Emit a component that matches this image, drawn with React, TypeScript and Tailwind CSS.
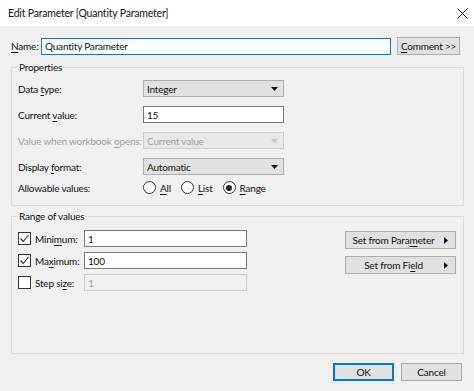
import React from 'react';

const font = { fontFamily: 'Lato, "Noto Sans", sans-serif' };

function U({ children }: { children: React.ReactNode }) {
  return <span className="underline underline-offset-2">{children}</span>;
}

function Arrow({ dim }: { dim?: boolean }) {
  return (
    <svg width="7" height="4" viewBox="0 0 7 4" className="shrink-0">
      <path d="M0 0h7L3.5 4z" fill={dim ? '#c4c4c4' : '#111'} />
    </svg>
  );
}

function Select({ value, disabled }: { value: string; disabled?: boolean }) {
  return (
    <div
      className={
        'flex h-[17px] w-[141px] items-center justify-between border pl-[3px] pr-[5px] ' +
        (disabled ? 'border-[#cccccc] bg-[#e8e8e8] text-[#a0a0a0]' : 'border-[#adadad] bg-[#e1e1e1] text-[#111]')
      }
    >
      <span>{value}</span>
      <Arrow dim={disabled} />
    </div>
  );
}

function TextBox({ value, w, disabled }: { value: string; w: string; disabled?: boolean }) {
  return (
    <div
      className={
        'flex h-[17px] items-center border pl-[3px] ' +
        w +
        (disabled ? ' border-[#cccccc] bg-[#f0f0f0] text-[#a0a0a0]' : ' border-[#7a7a7a] bg-white text-[#111]')
      }
    >
      {value}
    </div>
  );
}

function Radio({ checked, children }: { checked?: boolean; children: React.ReactNode }) {
  return (
    <div className="flex items-center gap-[4px]">
      <span className="flex h-[13px] w-[13px] items-center justify-center rounded-full border border-[#333] bg-white">
        {checked && <span className="h-[6px] w-[6px] rounded-full bg-[#222]" />}
      </span>
      <span>{children}</span>
    </div>
  );
}

function Check({ checked }: { checked?: boolean }) {
  return (
    <span className="flex h-[13px] w-[13px] items-center justify-center border border-[#333] bg-white">
      {checked && (
        <svg width="11" height="11" viewBox="0 0 11 11">
          <path d="M1.5 5.5l2.8 3L9.5 2" fill="none" stroke="#222" strokeWidth="1.1" />
        </svg>
      )}
    </span>
  );
}

function Btn({
  children,
  w,
  primary,
  arrow,
}: {
  children: React.ReactNode;
  w: string;
  primary?: boolean;
  arrow?: boolean;
}) {
  return (
    <div
      className={
        'relative flex h-[18px] items-center justify-center bg-[#e1e1e1] text-[#111] ' +
        w +
        (primary ? ' border-2 border-[#0078d7]' : ' border border-[#adadad]') +
        (arrow ? ' pr-[14px]' : '')
      }
    >
      <span>{children}</span>
      {arrow && (
        <svg width="4" height="7" viewBox="0 0 4 7" className="absolute right-[7px] top-[5px]">
          <path d="M0 0v7l4-3.5z" fill="#111" />
        </svg>
      )}
    </div>
  );
}

export default function App() {
  return (
    <div
      className="h-[391px] w-[474px] overflow-hidden whitespace-nowrap bg-[#f0f0f0] text-[10px] leading-none tracking-[-0.2px] text-[#111]"
      style={font}
    >
      <div className="flex h-[26px] items-center justify-between bg-white pl-[8px] pr-[6px] text-[10.5px]">
        <span>Edit Parameter [Quantity Parameter]</span>
        <svg width="11" height="11" viewBox="0 0 11 11">
          <path d="M0.5 0.5l10 10M10.5 0.5l-10 10" stroke="#222" strokeWidth="1" />
        </svg>
      </div>

      <div className="px-[11px] pt-[11px]">
        <div className="flex items-center">
          <span className="w-[30px]">
            <U>N</U>ame:
          </span>
          <TextBox value="Quantity Parameter" w="w-[350px] !border-[#0078d7]" />
          <div className="ml-[6px]">
            <Btn w="w-[63px]">
              <U>C</U>omment &gt;&gt;
            </Btn>
          </div>
        </div>

        <fieldset className="mt-[7px] w-[453px] border border-[#dcdcdc] px-[6px] pb-[11px]">
          <legend className="px-[1px]">Properties</legend>
          <div className="mt-[8px] grid grid-cols-[125px_1fr] items-center gap-y-[9px]">
            <span>
              Data <U>t</U>ype:
            </span>
            <Select value="Integer" />
            <span>
              Current <U>v</U>alue:
            </span>
            <TextBox value="15" w="w-[141px]" />
            <span className="text-[#a0a0a0]">
              Value when workbook <U>o</U>pens:
            </span>
            <Select value="Current value" disabled />
            <span>
              Display <U>f</U>ormat:
            </span>
            <Select value="Automatic" />
            <span className="-mt-[3px]">Allowable values:</span>
            <div className="-mt-[3px] flex items-center gap-[10px]">
              <Radio>
                <U>A</U>ll
              </Radio>
              <Radio>
                <U>L</U>ist
              </Radio>
              <Radio checked>
                <U>R</U>ange
              </Radio>
            </div>
          </div>
        </fieldset>

        <fieldset className="mt-[5px] h-[143px] w-[453px] border border-[#dcdcdc] px-[6px]">
          <legend className="px-[1px]">Range of values</legend>
          <div className="mt-[9px] flex justify-between">
            <div className="grid grid-cols-[13px_45px_163px] items-center gap-x-[4px] gap-y-[5px]">
              <Check checked />
              <span>
                Mini<U>m</U>um:
              </span>
              <TextBox value="1" w="w-[163px]" />
              <Check checked />
              <span>
                Ma<U>x</U>imum:
              </span>
              <TextBox value="100" w="w-[163px]" />
              <Check />
              <span>
                Step si<U>z</U>e:
              </span>
              <TextBox value="1" w="w-[163px]" disabled />
            </div>
            <div className="mr-[1px] mt-[1px] flex flex-col gap-[7px]">
              <Btn w="w-[111px]" arrow>
                Set from Para<U>m</U>eter
              </Btn>
              <Btn w="w-[111px]" arrow>
                Set from Fi<U>e</U>ld
              </Btn>
            </div>
          </div>
        </fieldset>

        <div className="mt-[9px] flex justify-end gap-[7px] pr-[1px]">
          <Btn w="w-[61px]" primary>
            OK
          </Btn>
          <Btn w="w-[61px]">Cancel</Btn>
        </div>
      </div>
    </div>
  );
}
